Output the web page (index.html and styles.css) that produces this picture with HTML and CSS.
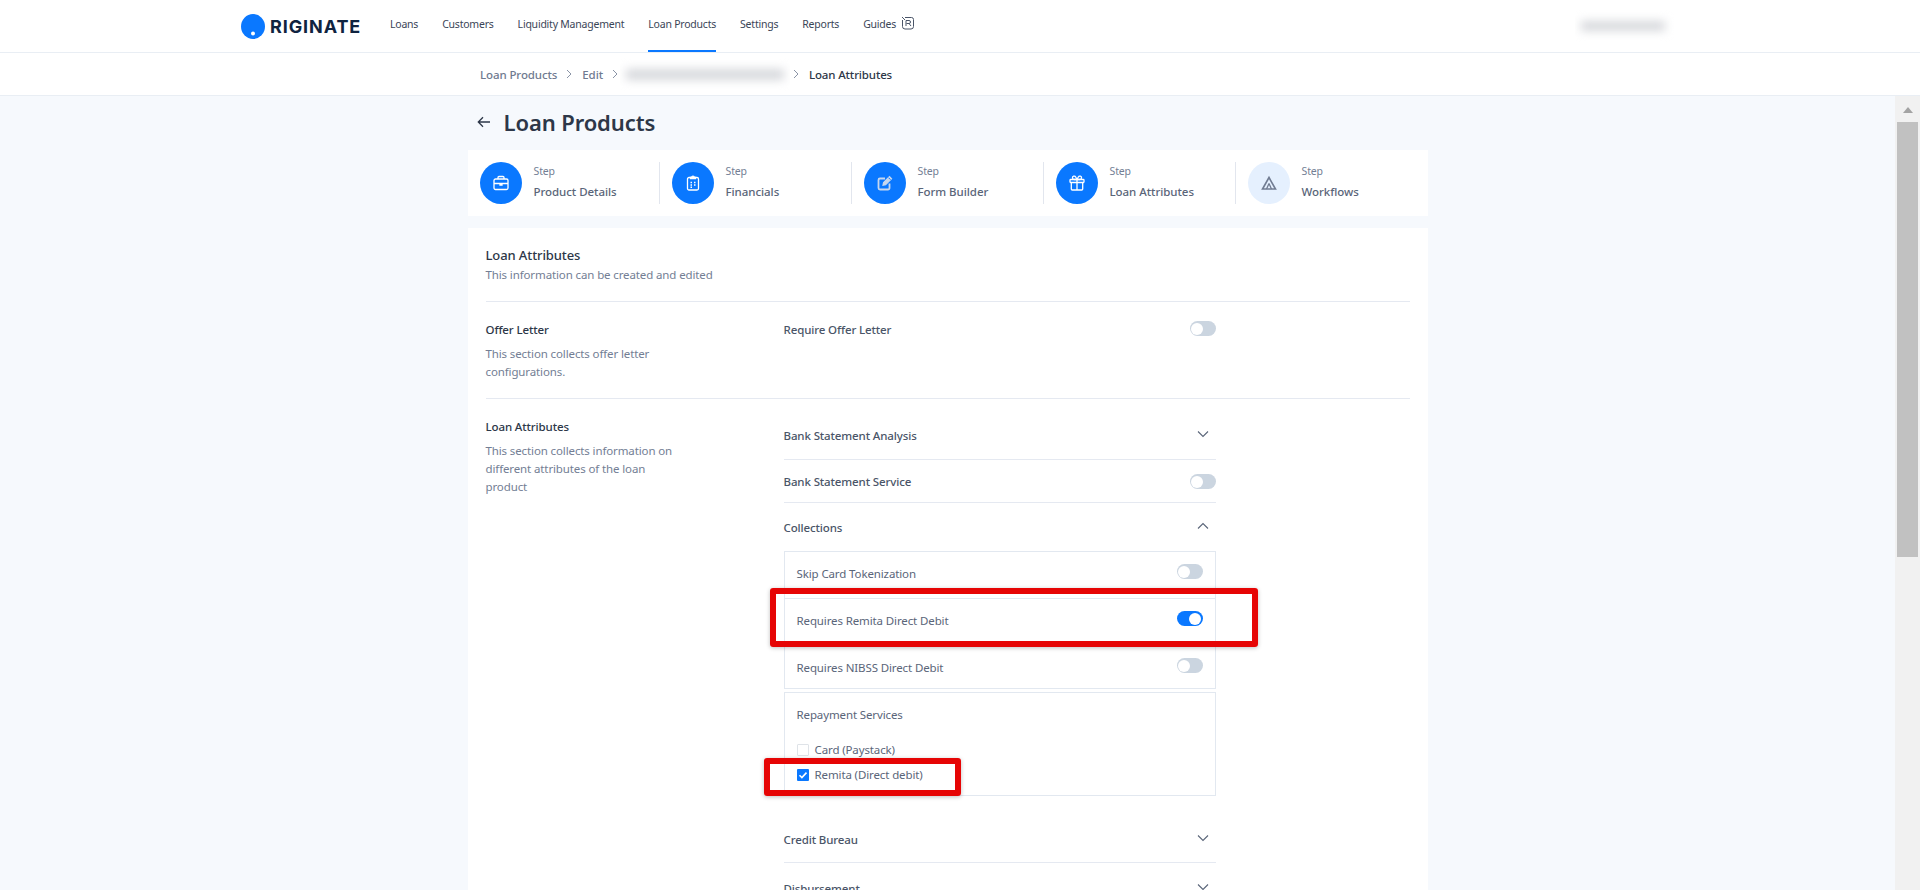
FILE: index.html
```html
<!DOCTYPE html>
<html lang="en">
<head>
<meta charset="utf-8">
<title>Loan Products</title>
<link rel="stylesheet" href="styles.css">
</head>
<body>
<header class="topbar">
  <a class="logo">
    <svg class="logo-mark" width="24" height="25" viewBox="0 0 24 25"><ellipse cx="12" cy="12.5" rx="12" ry="12.5" fill="#0a78ff"/><circle cx="12" cy="19.5" r="2" fill="#fff"/></svg>
    <span class="logo-text">RIGINATE</span>
  </a>
  <nav class="nav">
    <a class="nav-item">Loans</a>
    <a class="nav-item">Customers</a>
    <a class="nav-item">Liquidity Management</a>
    <a class="nav-item active">Loan Products</a>
    <a class="nav-item">Settings</a>
    <a class="nav-item">Reports</a>
    <a class="nav-item">Guides
      <svg class="nav-icon" width="14" height="14" viewBox="0 0 14 14" fill="none" stroke="#4a5568" stroke-width="1"><path d="M4 1.500h6.500a2 2 0 0 1 2 2v7a2.500 2.500 0 0 1-2.500 2.500H4a2.500 2.500 0 0 1-2.500-2.500V4"/><path d="M5 10V4.500h3a1.500 1.500 0 0 1 0 3H5.500M8 7.500l2 2.500M1 1l3 3"/></svg>
    </a>
  </nav>
  <div class="user-blur"><span class="user-blur-bar"></span></div>
</header>
<div class="crumbs">
  <span class="crumb">Loan Products</span>
  <svg class="crumb-sep" width="8" height="10" viewBox="0 0 8 10" fill="none" stroke="#8a94a6" stroke-width="1"><path d="M2 1l4 4-4 4"/></svg>
  <span class="crumb">Edit</span>
  <svg class="crumb-sep" width="8" height="10" viewBox="0 0 8 10" fill="none" stroke="#8a94a6" stroke-width="1"><path d="M2 1l4 4-4 4"/></svg>
  <span class="crumb-blur"><span class="crumb-blur-bar"></span></span>
  <svg class="crumb-sep" width="8" height="10" viewBox="0 0 8 10" fill="none" stroke="#8a94a6" stroke-width="1"><path d="M2 1l4 4-4 4"/></svg>
  <span class="crumb current">Loan Attributes</span>
</div>
<div class="viewport">
  <main class="scroller">
    <div class="column">
      <div class="page-title">
        <svg width="14" height="12" viewBox="0 0 14 12" fill="none" stroke="#2d3748" stroke-width="1.3"><path d="M13 6H1.500M6 1.300L1.300 6 6 10.700"/></svg>
        <h1>Loan Products</h1>
      </div>
      <div class="steps">
        <div class="step">
          <span class="step-circle">
            <svg width="16" height="16" viewBox="0 0 16 16" fill="none" stroke="#fff" stroke-width="1.3"><rect x="1" y="4" width="14" height="10.500" rx="1.500"/><path d="M5 4V2.500A1 1 0 0 1 6 1.500h4a1 1 0 0 1 1 1V4M1 8.500h14M7 8.500v1.500h2V8.500"/></svg>
          </span>
          <div class="step-text"><span class="step-label">Step</span><span class="step-name">Product Details</span></div>
        </div>
        <div class="step">
          <span class="step-circle">
            <svg width="16" height="16" viewBox="0 0 16 16" fill="none" stroke="#fff" stroke-width="1.3"><rect x="2.500" y="2.500" width="11" height="12.500" rx="1.500"/><path d="M5.500 3.500v-1h1.200a1.300 1.300 0 0 1 2.600 0h1.200v1z"/><path d="M5.500 7.500h1.500M9 7.500h1.500M5.500 10h1.500M9 10h1.500M5.500 12.200h1.500" stroke-width="1.400"/></svg>
          </span>
          <div class="step-text"><span class="step-label">Step</span><span class="step-name">Financials</span></div>
        </div>
        <div class="step">
          <span class="step-circle">
            <svg width="16" height="16" viewBox="0 0 16 16" fill="none" stroke="#c7d7ee" stroke-width="1.800"><path d="M8 3.500H3A1.500 1.500 0 0 0 1.500 5v8A1.500 1.500 0 0 0 3 14.500h8a1.500 1.500 0 0 0 1.500-1.500V8.500"/><path d="M6 10.200l.6-2.600L12.500 1.700l2 2-5.900 5.900z" fill="#c7d7ee" stroke-width="1.200"/><path d="M11.500 2.700l2 2" stroke="#0a78ff" stroke-width="1"/></svg>
          </span>
          <div class="step-text"><span class="step-label">Step</span><span class="step-name">Form Builder</span></div>
        </div>
        <div class="step">
          <span class="step-circle">
            <svg width="16" height="16" viewBox="0 0 16 16" fill="none" stroke="#fff" stroke-width="1.3"><rect x="1" y="4.500" width="14" height="3" rx=".7"/><path d="M2.300 7.500V14a1 1 0 0 0 1 1h9.400a1 1 0 0 0 1-1V7.500M8 4.500V15M8 4.500H5.200a1.700 1.700 0 1 1 1.500-2.500zM8 4.500h2.800a1.700 1.700 0 1 0-1.500-2.500z"/></svg>
          </span>
          <div class="step-text"><span class="step-label">Step</span><span class="step-name">Loan Attributes</span></div>
        </div>
        <div class="step">
          <span class="step-circle pending">
            <svg width="16" height="16" viewBox="0 0 16 16" fill="none" stroke="#717c92" stroke-width="1.600"><path d="M8 2.500L14.500 14h-13z"/><path d="M8 8.500L5.500 14M8 8.500l2.500 5.500" stroke-width="1.300"/></svg>
          </span>
          <div class="step-text"><span class="step-label">Step</span><span class="step-name">Workflows</span></div>
        </div>
      </div>

      <section class="card">
        <div class="card-head">
          <h2>Loan Attributes</h2>
          <p>This information can be created and edited</p>
        </div>

        <div class="section offer">
          <div class="section-info">
            <h3>Offer Letter</h3>
            <p>This section collects offer letter configurations.</p>
          </div>
          <div class="offer-row">
            <span class="row-title">Require Offer Letter</span>
            <span class="toggle"></span>
          </div>
        </div>

        <div class="section attrs">
          <div class="section-info">
            <h3>Loan Attributes</h3>
            <p>This section collects information on different attributes of the loan product</p>
          </div>
          <div class="attr-list">
            <div class="attr attr-first">
              <span class="row-title">Bank Statement Analysis</span>
              <svg class="chev" width="12" height="8" viewBox="0 0 12 8" fill="none" stroke="#5a6579" stroke-width="1.100"><path d="M1 1.500l5 5 5-5"/></svg>
            </div>
            <div class="attr attr-toggle">
              <span class="row-title">Bank Statement Service</span>
              <span class="toggle"></span>
            </div>
            <div class="attr-open">
              <span class="row-title">Collections</span>
              <svg class="chev" width="12" height="8" viewBox="0 0 12 8" fill="none" stroke="#5a6579" stroke-width="1.100"><path d="M1 6.500l5-5 5 5"/></svg>
            </div>
            <div class="subbox">
              <div class="subrow sub-1"><span class="sub-label">Skip Card Tokenization</span><span class="toggle"></span></div>
              <div class="subrow sub-2"><span class="sub-label">Requires Remita Direct Debit</span><span class="toggle on"></span></div>
              <div class="subrow sub-3"><span class="sub-label">Requires NIBSS Direct Debit</span><span class="toggle"></span></div>
            </div>
            <div class="repay">
              <div class="sub-label repay-title">Repayment Services</div>
              <div class="check-row"><span class="check"></span><span class="sub-label">Card (Paystack)</span></div>
              <div class="check-row"><span class="check checked"><svg width="12" height="12" viewBox="0 0 12 12" fill="none" stroke="#fff" stroke-width="1.600"><path d="M2.500 6.200l2.400 2.400 4.600-5"/></svg></span><span class="sub-label">Remita (Direct debit)</span></div>
            </div>
            <div class="attr attr-credit">
              <span class="row-title">Credit Bureau</span>
              <svg class="chev" width="12" height="8" viewBox="0 0 12 8" fill="none" stroke="#5a6579" stroke-width="1.100"><path d="M1 1.500l5 5 5-5"/></svg>
            </div>
            <div class="attr attr-disb">
              <span class="row-title">Disbursement</span>
              <svg class="chev" width="12" height="8" viewBox="0 0 12 8" fill="none" stroke="#5a6579" stroke-width="1.100"><path d="M1 1.500l5 5 5-5"/></svg>
            </div>
          </div>
        </div>

        <div class="mark mark-toggle"></div>
        <div class="mark mark-check"></div>
      </section>
    </div>
  </main>
  <aside class="scrollbar">
    <span class="scroll-arrow"></span>
    <span class="scroll-thumb"></span>
  </aside>
</div>
</body>
</html>
```
FILE: styles.css
```css
* { box-sizing: border-box; }
html, body { margin: 0; height: 890px; overflow: hidden; }
body {
  display: flex;
  flex-direction: column;
  font-family: "Noto Sans", "Open Sans", sans-serif;
  font-size: 11.500px;
  letter-spacing: -.12px;
  color: #4a5568;
  background: #f6f9fd;
}
h1, h2, h3, p { margin: 0; }

/* top bar */
.topbar {
  flex: none;
  height: 53px;
  display: flex;
  align-items: stretch;
  padding-left: 241px;
  background: #fff;
  border-bottom: 1px solid #e9eef4;
  position: relative;
}
.logo { display: flex; align-items: center; gap: 5px; width: 149px; padding-top: 1px; }
.logo-mark { flex: none; }
.logo-text {
  font-family: Inter, "Liberation Sans", sans-serif;
  font-size: 18px;
  font-weight: 700;
  letter-spacing: .9px;
  color: #0f2340;
}
.nav { display: flex; gap: 24px; }
.nav-item {
  display: flex;
  align-items: center;
  gap: 5px;
  height: 52px;
  padding-bottom: 5px;
  font-size: 10.500px;
  letter-spacing: -.22px;
  color: #3a4557;
  white-space: nowrap;
}
.nav-item.active { border-bottom: 2px solid #0a78ff; padding-bottom: 3px; }
.nav-icon { flex: none; margin-top: -1px; }
.user-blur {
  position: absolute;
  left: 1575px;
  top: 8px;
  width: 120px;
  height: 42px;
  overflow: hidden;
}
.user-blur-bar {
  display: block;
  margin: 13px 0 0 6px;
  width: 84px;
  height: 10px;
  background: #d6d8dc;
  filter: blur(5px);
}

/* breadcrumb */
.crumbs {
  flex: none;
  height: 43px;
  display: flex;
  align-items: center;
  padding-left: 480px;
  background: #fff;
  border-bottom: 1px solid #e9eef4;
  color: #6f7a90;
}
.crumb { white-space: nowrap; font-weight: 500; letter-spacing: -.1px; }
.crumb.current { color: #2d3748; letter-spacing: -.14px; }
.crumb-sep { flex: none; margin: 0 9px 1px 8px; }
.crumb-blur {
  display: block;
  width: 170px;
  height: 33px;
  margin: 0 -6px 0 -8px;
  overflow: hidden;
}
.crumb-blur-bar {
  display: block;
  margin: 11px 0 0 6px;
  width: 158px;
  height: 11px;
  background: #d6d8dc;
  filter: blur(5px);
}

/* scrolling area */
.viewport { flex: 1; display: flex; min-height: 0; }
.scroller { flex: 1; min-width: 0; overflow: hidden; }
.column { width: 960px; margin: 0 auto; }
.scrollbar {
  flex: none;
  width: 25px;
  display: flex;
  flex-direction: column;
  align-items: center;
  background: #f1f1f1;
}
.scroll-arrow {
  margin-top: 11px;
  width: 0;
  height: 0;
  border-left: 5.500px solid transparent;
  border-right: 5.500px solid transparent;
  border-bottom: 6px solid #a3a3a3;
}
.scroll-thumb {
  margin-top: 9px;
  width: 21px;
  height: 435px;
  background: #c1c1c1;
}

/* title */
.page-title {
  height: 54px;
  display: flex;
  align-items: center;
  gap: 13px;
  padding: 0 0 3px 9px;
}
.page-title h1 { font-size: 22px; letter-spacing: -.1px; line-height: 30px; font-weight: 600; color: #2d3748; }

/* stepper */
.steps {
  height: 66px;
  display: grid;
  grid-template-columns: repeat(5, 192px);
  padding: 12px 0;
  background: #fff;
}
.step {
  display: flex;
  align-items: center;
  gap: 12px;
  padding-left: 12px;
  border-right: 1px solid #e2e6ee;
}
.step:last-child { border-right: 0; }
.step-circle {
  flex: none;
  width: 42px;
  height: 42px;
  border-radius: 50%;
  display: flex;
  align-items: center;
  justify-content: center;
  background: #0a78ff;
}
.step-circle.pending { background: #e5f0fe; }
.step-text { display: flex; flex-direction: column; margin-top: -2px; }
.step-label { font-size: 10.500px; line-height: 15px; color: #737e94; }
.step-name { margin-top: 4px; font-size: 11.500px; line-height: 17px; font-weight: 500; letter-spacing: -.05px; color: #5a6579; }

/* main card */
.card {
  position: relative;
  margin-top: 12px;
  padding: 0 18px;
  background: #fff;
  height: 700px;
}
.card-head { height: 74px; padding-top: 18px; border-bottom: 1px solid #e5e9f1; }
.card-head h2 { font-size: 13px; letter-spacing: -.1px; line-height: 18px; font-weight: 500; color: #2d3748; }
.card-head p { margin-top: 2px; line-height: 18px; color: #737e94; }

.section { display: grid; grid-template-columns: 298px 432px; }
.section-info { padding-top: 19px; }
.section-info h3 { font-size: 11.500px; line-height: 18px; font-weight: 500; color: #2d3748; }
.section-info p { margin-top: 6px; width: 196px; line-height: 18px; color: #737e94; }

.offer { height: 97px; border-bottom: 1px solid #e5e9f1; }
.offer-row { display: flex; justify-content: space-between; align-items: flex-start; padding-top: 19px; }

.row-title { line-height: 18px; font-weight: 500; color: #4a5568; }

/* toggle */
.toggle {
  flex: none;
  position: relative;
  display: block;
  width: 26px;
  height: 15px;
  border-radius: 8px;
  background: #cbd5e0;
}
.toggle::after {
  content: "";
  position: absolute;
  top: 1.500px;
  left: 1.500px;
  width: 12px;
  height: 12px;
  border-radius: 50%;
  background: #fff;
}
.toggle.on { background: #0a78ff; }
.toggle.on::after { left: 12.500px; }

/* attribute rows */
.attr, .attr-open {
  display: flex;
  justify-content: space-between;
  align-items: center;
  border-bottom: 1px solid #e5e9f1;
}
.attr-open { border-bottom: 0; height: 48px; padding-top: 1px; }
.attr-first { height: 61px; padding-top: 13px; }
.attr-toggle { height: 43px; padding-top: 1px; }
.attr-credit { height: 49px; padding-top: 3px; }
.attr-disb { height: 50px; padding-top: 2px; }
.chev { margin-right: 7px; margin-top: -3px; }

.subbox { border: 1px solid #e2e8f0; height: 138px; }
.subrow {
  display: flex;
  justify-content: space-between;
  align-items: flex-start;
  padding: 12px 12px 0;
}
.sub-1 { height: 47px; border-bottom: 1px solid #e2e8f0; }
.sub-2 { height: 47px; }
.sub-3 { height: 42px; }
.sub-label { line-height: 18px; color: #5a6579; }
.subrow .sub-label { margin-top: 1px; }

.repay {
  height: 104px;
  margin: 3px 0 18px;
  padding: 13px 12px 0;
  border: 1px solid #e2e8f0;
}
.repay-title { margin-bottom: 17px; }
.check-row { display: flex; align-items: center; gap: 6px; height: 18px; margin-bottom: 7px; }
.check {
  flex: none;
  width: 12px;
  height: 12px;
  border: 1px solid #dfe3e8;
  border-radius: 1px;
  background: #fff;
}
.check.checked {
  display: flex;
  border: 0;
  background: #0a78ff;
}

/* red annotation frames */
.mark {
  position: absolute;
  border: 6px solid #e60505;
  border-radius: 3px;
  box-shadow: 0 1px 4px rgba(0, 0, 0, .25);
}
.mark-toggle { left: 302px; top: 360px; width: 488px; height: 59px; }
.mark-check { left: 296px; top: 530px; width: 197px; height: 38px; }
```
